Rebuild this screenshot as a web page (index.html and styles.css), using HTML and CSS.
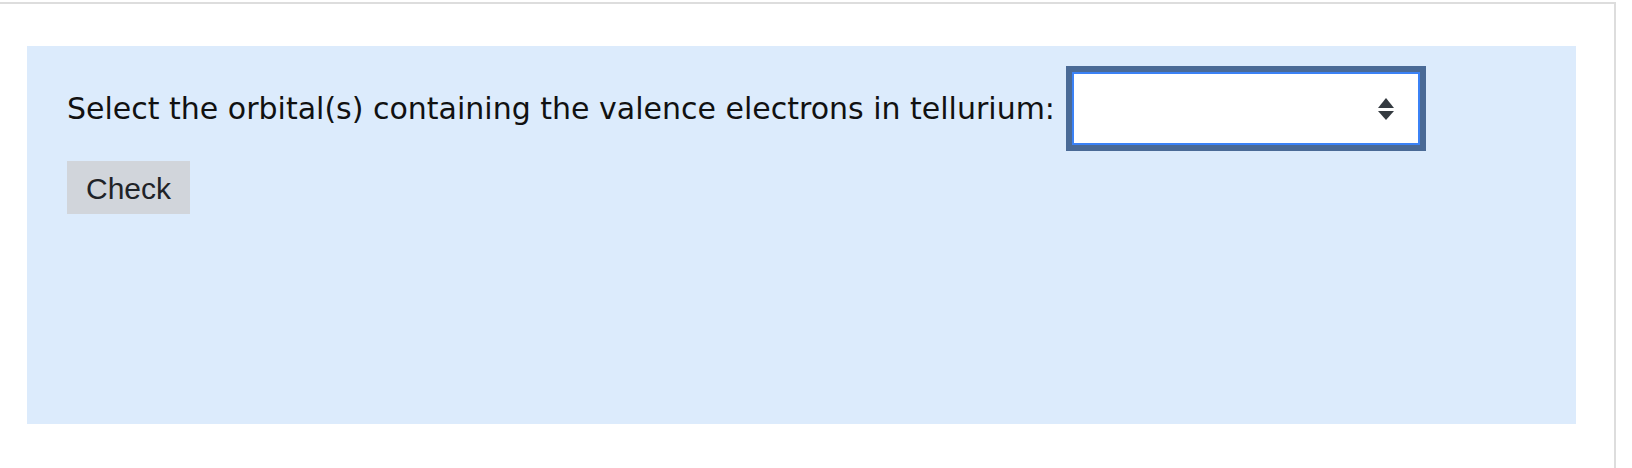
FILE: index.html
```html
<!DOCTYPE html>
<html>
<head>
<meta charset="utf-8">
<link rel="stylesheet" href="styles.css">
</head>
<body>
<div class="frame">
  <div class="card">
    <div class="question">
      <span class="prompt">Select the orbital(s) containing the valence electrons in tellurium:</span>
      <div class="select-wrap">
        <select class="select" aria-label="orbitals">
          <option></option>
        </select>
        <svg class="arrows" width="16" height="22" viewBox="0 0 16 22">
          <path d="M8 0 L16 10 L0 10 Z" fill="#343a40"/>
          <path d="M0 13 L16 13 L8 22 Z" fill="#343a40"/>
        </svg>
      </div>
    </div>
    <button class="check">Check</button>
  </div>
</div>
</body>
</html>
```
FILE: styles.css
```css
html, body {
  margin: 0;
  padding: 0;
  background: #ffffff;
}
body {
  width: 1632px;
  height: 468px;
  overflow: hidden;
}
.frame {
  margin-top: 2px;
  width: 1616px;
  height: 480px;
  border-top: 2px solid #dddddd;
  border-right: 2px solid #dddddd;
  padding: 42px 40px 0 27px;
  box-sizing: border-box;
}
.card {
  width: 1549px;
  height: 378px;
  background: #dcebfc;
  padding: 20px 40px;
  box-sizing: border-box;
}
.question {
  display: flex;
  align-items: center;
  gap: 11px;
}
.prompt {
  font-family: "DejaVu Sans", Verdana, sans-serif;
  font-size: 30px;
  color: #111111;
}
.select-wrap {
  position: relative;
  width: 360px;
  height: 85px;
}
.select {
  appearance: none;
  -webkit-appearance: none;
  width: 100%;
  height: 100%;
  margin: 0;
  border: 6px solid #4a6a96;
  box-shadow: inset 0 0 0 2px #3b82f6;
  background: #ffffff;
  border-radius: 0;
  outline: none;
  box-sizing: border-box;
}
.arrows {
  position: absolute;
  left: 312px;
  top: 32px;
  pointer-events: none;
}
.check {
  display: block;
  margin-top: 10px;
  width: 123px;
  height: 53px;
  padding: 2px 0 0;
  border: none;
  border-radius: 0;
  background: #d1d5db;
  color: #1f2328;
  font-family: "Liberation Sans", Arial, sans-serif;
  font-size: 30px;
}
```
